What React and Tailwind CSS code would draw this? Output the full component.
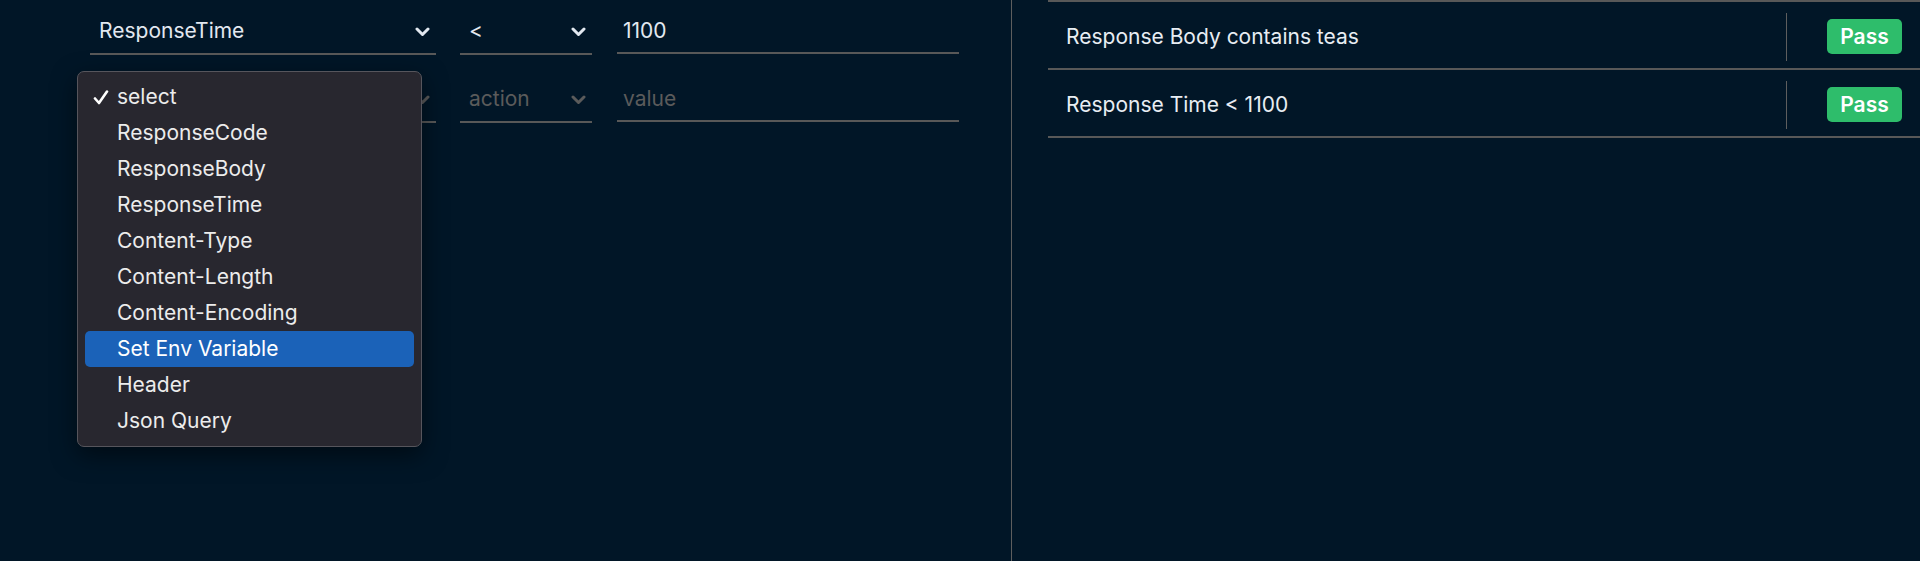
import { useState } from 'react';

const ChevronDown = ({ className = '' }) => (
  <svg width="15" height="10" viewBox="0 0 15 10" fill="none" className={className}>
    <path d="M2 2 L7.5 7.5 L13 2" stroke="currentColor" strokeWidth="3" strokeLinecap="round" strokeLinejoin="round" />
  </svg>
);

const Check = () => (
  <svg width="16" height="15" viewBox="0 0 16 15" fill="none">
    <path d="M2 8.5 L6 13 L14 1.5" stroke="currentColor" strokeWidth="2.6" strokeLinecap="round" strokeLinejoin="round" />
  </svg>
);

const FlushedSelect = ({ value, placeholder, width }) => (
  <div className={`${width} h-10 flex items-center justify-between border-b-2 border-[#585858] pl-[9px] pr-[6px] pb-[7px]`}>
    <span className={value ? 'text-[#e2e8f0]' : 'text-[#5b5b5b]'}>{value || placeholder}</span>
    <ChevronDown className={`mt-[3px] ${value ? 'text-[#e2e8f0]' : 'text-[#5b5b5b]'}`} />
  </div>
);

const FlushedInput = ({ value, placeholder }) => (
  <input
    readOnly
    value={value}
    placeholder={placeholder}
    className="w-[342px] h-[39px] bg-transparent outline-none border-b-2 border-[#585858] pl-[6px] pb-[7px] text-[#e2e8f0] placeholder:text-[#5b5b5b]"
  />
);

const options = [
  'select',
  'ResponseCode',
  'ResponseBody',
  'ResponseTime',
  'Content-Type',
  'Content-Length',
  'Content-Encoding',
  'Set Env Variable',
  'Header',
  'Json Query',
];

const results = [
  { text: 'Response Body contains teas', status: 'Pass' },
  { text: 'Response Time < 1100', status: 'Pass' },
];

export default function App() {
  const [hovered] = useState('Set Env Variable');

  return (
    <div
      className="relative flex min-h-screen w-full bg-[#011627] text-[21px] overflow-hidden"
      style={{ fontFamily: 'Inter, "Noto Sans", sans-serif' }}
    >
      {/* assertions editor */}
      <div className="w-[1012px] shrink-0 border-r border-[#5e5e5e] pt-[15px] pl-[90px] flex flex-col gap-[28px]">
        <div className="flex items-start">
          <FlushedSelect value="ResponseTime" width="w-[346px]" />
          <div className="w-[24px]" />
          <FlushedSelect value="<" width="w-[132px]" />
          <div className="w-[25px]" />
          <FlushedInput value="1100" />
        </div>
        <div className="flex items-start">
          <FlushedSelect placeholder="select" width="w-[346px]" />
          <div className="w-[24px]" />
          <FlushedSelect placeholder="action" width="w-[132px]" />
          <div className="w-[25px]" />
          <FlushedInput value="" placeholder="value" />
        </div>
      </div>

      {/* results table */}
      <div className="flex-1 pl-[36px]">
        <div className="border-t-2 border-[#585858]">
          {results.map((r) => (
            <div key={r.text} className="flex items-center h-[68px] pt-[3px] border-b-2 border-[#585858]">
              <div className="flex-1 pl-[18px] text-[#e8edf3]">{r.text}</div>
              <div className="w-px h-[48px] bg-[#5e5e5e]" />
              <div className="pl-[40px] pr-[18px]">
                <span className="flex items-center justify-center w-[75px] h-[35px] rounded-[5px] bg-[#2ebd6b] text-white font-semibold">
                  {r.status}
                </span>
              </div>
            </div>
          ))}
        </div>
      </div>

      {/* open native select popup */}
      <div className="absolute left-[77px] top-[71px] w-[345px] h-[376px] rounded-[7px] border border-[#56555c] bg-[#28272f] p-[7px] shadow-[0_8px_24px_rgba(0,0,0,0.5)]">
        {options.map((o, i) => (
          <div
            key={o}
            className={`relative flex items-center h-9 pl-8 rounded-[5px] text-[#ececec] ${o === hovered ? 'bg-[#1b62b8] text-white' : ''}`}
          >
            {i === 0 && (
              <span className="absolute left-[8px] top-[11px] text-white">
                <Check />
              </span>
            )}
            {o}
          </div>
        ))}
      </div>
    </div>
  );
}
